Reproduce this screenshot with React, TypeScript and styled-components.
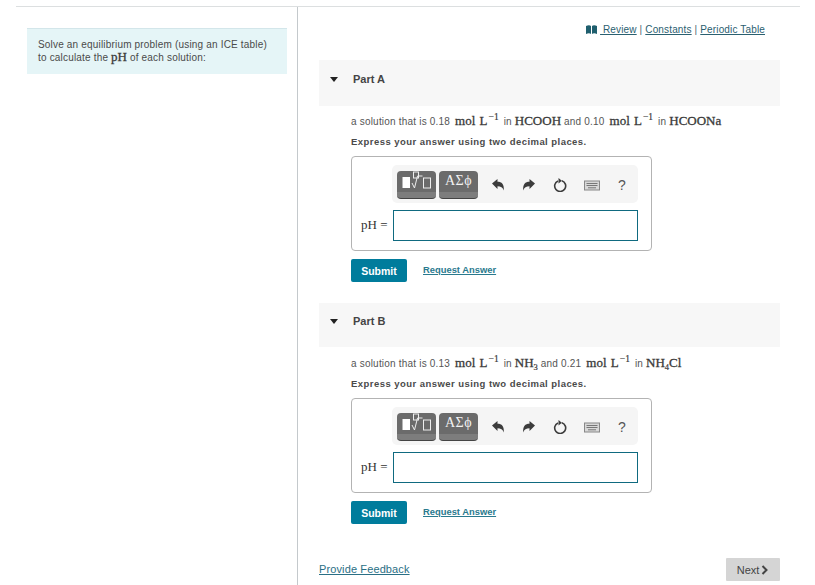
import React from 'react';
import styled, { createGlobalStyle } from 'styled-components';

const GlobalStyle = createGlobalStyle`
  html, body { margin: 0; padding: 0; background: #fff; }
  body { font-family: "Liberation Sans", Arial, sans-serif; color: #333; }
  * { box-sizing: border-box; }
`;

const Page = styled.div`
  width: 815px;
  height: 585px;
  overflow: hidden;
  padding: 6px 15px 0 16px;
`;
const Columns = styled.div`
  display: grid;
  grid-template-columns: 282px 1fr;
  height: 579px;
  border-top: 1px solid #dcdfe0;
`;
const Sidebar = styled.aside`
  border-right: 1px solid #c4c9cc;
  padding: 21px 10px 0 11px;
`;
const Intro = styled.div`
  height: 46px;
  background: #e5f5f7;
  border-top: 1px solid #d3e6ea;
  padding: 9px 11px;
  font-size: 10px;
  line-height: 13px;
  letter-spacing: 0.18px;
  color: #4a4a4a;
`;
const Math = styled.span`
  font-family: "Liberation Serif", "Times New Roman", serif;
  font-size: 13px;
  line-height: 0;
  letter-spacing: 0;
  word-spacing: 1px;
  -webkit-text-stroke: 0.3px #3a3a3a;
  color: #3a3a3a;
`;
const UnitText = styled(Math)`
  margin-left: 5px;
  margin-right: 5px;
`;
const Script = styled.span<{ $up?: boolean }>`
  font-size: ${(p) => (p.$up ? '9.5px' : '8.5px')};
  line-height: 0;
  position: relative;
  top: ${(p) => (p.$up ? '-5px' : '3px')};
  margin-left: ${(p) => (p.$up ? '1px' : '0')};
  -webkit-text-stroke: 0.2px #3a3a3a;
`;
const Main = styled.main`
  padding: 0 20px 0 21px;
  display: flex;
  flex-direction: column;
`;
const TopLinks = styled.div`
  height: 53px;
  padding: 16px 15px 0 0;
  display: flex;
  justify-content: flex-end;
  align-items: flex-start;
  font-size: 10px;
  line-height: 14px;
  letter-spacing: 0.15px;
  color: #4f6a72;
  white-space: pre;
`;
const TopLink = styled.a`
  color: #2a6070;
  text-decoration: underline;
`;
const BookIcon = styled.svg`
  width: 11px;
  height: 9px;
  margin: 2px 3px 0 0;
`;
const PartSection = styled.section`
  margin-bottom: 21px;
`;
const PartHeader = styled.div<{ $h: number; $lift: number }>`
  height: ${(p) => p.$h}px;
  background: #f7f7f7;
  display: flex;
  align-items: center;
  padding: 0 0 ${(p) => p.$lift}px 11px;
  gap: 15px;
  font-size: 11px;
  font-weight: 700;
  color: #444;
`;
const Caret = styled.span`
  width: 0;
  height: 0;
  border-left: 4.5px solid transparent;
  border-right: 4.5px solid transparent;
  border-top: 5px solid #222;
`;
const PartBody = styled.div<{ $top: number }>`
  padding: ${(p) => p.$top}px 0 0 32px;
`;
const Question = styled.p`
  margin: 0;
  height: 21px;
  display: flex;
  align-items: center;
  font-size: 10px;
  letter-spacing: 0.2px;
  color: #555;
  white-space: pre;
`;
const Hint = styled.p`
  margin: 0 0 4px;
  height: 20px;
  line-height: 20px;
  font-size: 9.5px;
  font-weight: 700;
  letter-spacing: 0.45px;
  color: #4a4a4a;
`;
const AnswerBox = styled.div`
  width: 301px;
  height: 95px;
  border: 1px solid #b3b3b3;
  border-radius: 4px;
  padding: 8px 13px 0 9px;
`;
const Toolbar = styled.div`
  width: 246px;
  height: 38px;
  margin-left: 31px;
  background: #f5f5f5;
  border-radius: 5px;
  display: flex;
  align-items: center;
  padding-left: 5px;
`;
const PaletteButton = styled.div<{ $w: number }>`
  width: ${(p) => p.$w}px;
  height: 28px;
  margin-right: 3px;
  margin-top: 2px;
  border-radius: 4px;
  background: linear-gradient(#6b6b6b 0 76%, #7d7d7d 76%);
  border-bottom: 1px solid #444;
  display: flex;
  justify-content: center;
  color: #f2f2f2;
`;
const GreekLabel = styled.span`
  font-family: "Liberation Serif", serif;
  font-size: 14px;
  line-height: 19px;
  letter-spacing: 0.5px;
`;
const ToolIcons = styled.div`
  flex: 1;
  display: flex;
  align-items: center;
  justify-content: space-between;
  padding: 2px 11px 0 10px;
`;
const ToolIcon = styled.svg<{ $w?: number }>`
  width: ${(p) => p.$w ?? 14}px;
  height: 14px;
  display: block;
`;
const HelpMark = styled.span`
  font-size: 14px;
  color: #555;
  width: 10px;
  text-align: center;
`;
const InputRow = styled.div`
  display: flex;
  align-items: center;
  margin-top: 7px;
`;
const InputLabel = styled.label`
  width: 32px;
  margin-top: -2px;
  font-family: "Liberation Serif", serif;
  font-size: 13px;
  color: #333;
  white-space: pre;
`;
const FakeInput = styled.div`
  width: 245px;
  height: 31px;
  border: 1px solid #0f6a80;
  background: #fff;
`;
const Actions = styled.div`
  display: flex;
  align-items: center;
  gap: 16px;
  margin-top: 8px;
`;
const SubmitButton = styled.button`
  width: 56px;
  height: 23px;
  border: 0;
  border-radius: 2px;
  background: #007c9c;
  color: #fff;
  font: 700 10.5px "Liberation Sans", sans-serif;
  padding: 1px 0 0;
`;
const RequestLink = styled.a`
  font-size: 9.4px;
  font-weight: 700;
  letter-spacing: 0;
  color: #2a7a8e;
  text-decoration: underline;
  margin-top: -3px;
`;
const Footer = styled.footer`
  display: flex;
  justify-content: space-between;
  align-items: center;
  height: 23px;
  margin-top: 13px;
`;
const FeedbackLink = styled.a`
  margin-top: -2px;
  font-size: 11px;
  letter-spacing: 0.12px;
  color: #2a6f85;
  text-decoration: underline;
`;
const NextButton = styled.div`
  width: 54px;
  height: 23px;
  background: #d5d5d5;
  border-radius: 1px;
  display: flex;
  align-items: center;
  justify-content: center;
  gap: 2px;
  font-size: 11px;
  color: #444;
`;

const ToolbarIcons = () => (
  <ToolIcons>
    <ToolIcon viewBox="0 0 14 14">
      <path d="M1 5.500 6.500 1v2.800c4.300 0 6.800 2.500 6.300 8.700-1-3.300-3-4.300-6.300-4.300V11z" fill="#3c3c3c" />
    </ToolIcon>
    <ToolIcon viewBox="0 0 14 14">
      <path d="M13 5.500 7.500 1v2.800c-4.300 0-6.800 2.500-6.300 8.700 1-3.300 3-4.300 6.300-4.300V11z" fill="#3c3c3c" />
    </ToolIcon>
    <ToolIcon viewBox="0 0 14 14">
      <path d="M8.800 2.700a5.500 5.500 0 1 1-3.800.2" fill="none" stroke="#3c3c3c" strokeWidth="1.600" />
      <path d="M5.500 0v5.400l3.400-2.700z" fill="#3c3c3c" />
    </ToolIcon>
    <ToolIcon $w={16} viewBox="0 0 16 14">
      <rect x="0.500" y="3" width="15" height="9" fill="#d8d8d8" stroke="#888" />
      <path d="M2.500 5.500h11M2.500 7.500h11M4 9.800h8" stroke="#777" strokeWidth="1" />
    </ToolIcon>
    <HelpMark>?</HelpMark>
  </ToolIcons>
);

const TemplateIcon = () => (
  <svg width="36" height="24" viewBox="0 0 36 24">
    <rect x="3.500" y="6" width="7.500" height="11" fill="#fff" />
    <path d="M13 12l2.500 5 3-12h5" fill="none" stroke="#eee" strokeWidth="1" />
    <rect x="14.500" y="1" width="5" height="6" fill="none" stroke="#eee" strokeWidth="1" />
    <rect x="24.500" y="7" width="7" height="10" fill="none" stroke="#eee" strokeWidth="1" />
  </svg>
);

type PartProps = {
  name: string;
  headerHeight: number;
  lift: number;
  bodyTop: number;
  question: React.ReactNode;
};

const Part = ({ name, headerHeight, lift, bodyTop, question }: PartProps) => (
  <PartSection>
    <PartHeader $h={headerHeight} $lift={lift}>
      <Caret />
      {name}
    </PartHeader>
    <PartBody $top={bodyTop}>
      <Question>{question}</Question>
      <Hint>Express your answer using two decimal places.</Hint>
      <AnswerBox>
        <Toolbar>
          <PaletteButton $w={39}><TemplateIcon /></PaletteButton>
          <PaletteButton $w={39}><GreekLabel>ΑΣϕ</GreekLabel></PaletteButton>
          <ToolbarIcons />
        </Toolbar>
        <InputRow>
          <InputLabel>pH =</InputLabel>
          <FakeInput />
        </InputRow>
      </AnswerBox>
      <Actions>
        <SubmitButton>Submit</SubmitButton>
        <RequestLink>Request Answer</RequestLink>
      </Actions>
    </PartBody>
  </PartSection>
);

const Unit = () => (
  <UnitText>
    mol L<Script $up>−1</Script>
  </UnitText>
);

function App() {
  return (
    <Page>
      <GlobalStyle />
      <Columns>
        <Sidebar>
          <Intro>
            Solve an equilibrium problem (using an ICE table)
            <br />
            to calculate the <Math>pH</Math> of each solution:
          </Intro>
        </Sidebar>
        <Main>
          <TopLinks>
            <BookIcon viewBox="0 0 11 9">
              <path d="M0 1c2-1 4-1 5 0v8c-1-1-3-1-5 0zM6 1c1-1 3-1 5 0v8c-2-1-4-1-5 0z" fill="#1f5f6e" />
            </BookIcon>
            <TopLink> Review</TopLink> | <TopLink>Constants</TopLink> | <TopLink>Periodic Table</TopLink>
          </TopLinks>
          <Part
            name="Part A"
            headerHeight={46}
            lift={8}
            bodyTop={5}
            question={
              <span>
                a solution that is 0.18<Unit />in <Math>HCOOH</Math> and 0.10<Unit />in <Math>HCOONa</Math>
              </span>
            }
          />
          <Part
            name="Part B"
            headerHeight={44}
            lift={8}
            bodyTop={6}
            question={
              <span>
                a solution that is 0.13<Unit />in <Math>NH<Script>3</Script></Math> and 0.21<Unit />in{' '}
                <Math>NH<Script>4</Script>Cl</Math>
              </span>
            }
          />
          <Footer>
            <FeedbackLink>Provide Feedback</FeedbackLink>
            <NextButton>
              Next
              <svg width="8" height="10" viewBox="0 0 8 10"><path d="M1.500 1l4 4-4 4" fill="none" stroke="#444" strokeWidth="2" /></svg>
            </NextButton>
          </Footer>
        </Main>
      </Columns>
    </Page>
  );
}

export default App;
